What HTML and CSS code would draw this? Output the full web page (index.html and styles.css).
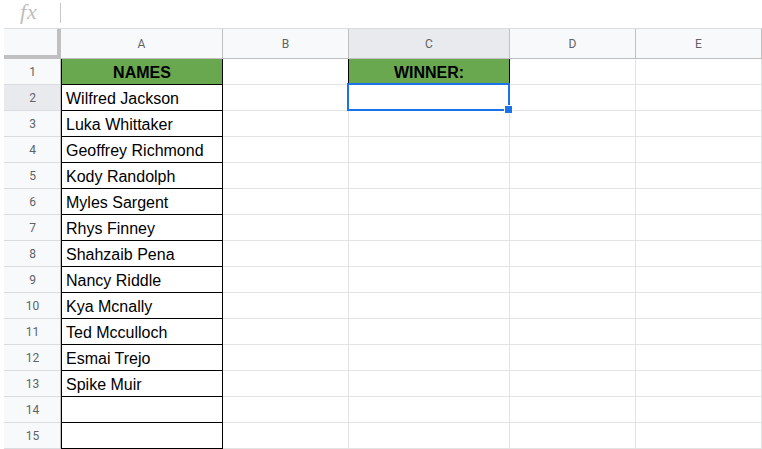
FILE: index.html
```html
<!DOCTYPE html>
<html>
<head>
<meta charset="utf-8">
<link rel="stylesheet" href="styles.css">
</head>
<body>
<div class="app">
  <div class="fbar">
    <span class="fx">fx</span>
    <span class="fdiv"></span>
  </div>
  <div class="sheet">
    <div class="corner"></div>
    <div class="ch">A</div>
    <div class="ch">B</div>
    <div class="ch ch-sel">C</div>
    <div class="ch">D</div>
    <div class="ch">E</div>

    <div class="rh">1</div>
    <div class="c a green bold">NAMES</div>
    <div class="c bk-r"></div>
    <div class="c green bold bk-r bk-b">WINNER:</div>
    <div class="c"></div>
    <div class="c"></div>

    <div class="rh rh-sel">2</div>
    <div class="c a">Wilfred Jackson</div>
    <div class="c"></div>
    <div class="c cur"><div class="sel"><span class="handle"></span></div></div>
    <div class="c"></div>
    <div class="c"></div>

    <div class="rh">3</div>
    <div class="c a">Luka Whittaker</div>
    <div class="c"></div><div class="c"></div><div class="c"></div><div class="c"></div>

    <div class="rh">4</div>
    <div class="c a">Geoffrey Richmond</div>
    <div class="c"></div><div class="c"></div><div class="c"></div><div class="c"></div>

    <div class="rh">5</div>
    <div class="c a">Kody Randolph</div>
    <div class="c"></div><div class="c"></div><div class="c"></div><div class="c"></div>

    <div class="rh">6</div>
    <div class="c a">Myles Sargent</div>
    <div class="c"></div><div class="c"></div><div class="c"></div><div class="c"></div>

    <div class="rh">7</div>
    <div class="c a">Rhys Finney</div>
    <div class="c"></div><div class="c"></div><div class="c"></div><div class="c"></div>

    <div class="rh">8</div>
    <div class="c a">Shahzaib Pena</div>
    <div class="c"></div><div class="c"></div><div class="c"></div><div class="c"></div>

    <div class="rh">9</div>
    <div class="c a">Nancy Riddle</div>
    <div class="c"></div><div class="c"></div><div class="c"></div><div class="c"></div>

    <div class="rh">10</div>
    <div class="c a">Kya Mcnally</div>
    <div class="c"></div><div class="c"></div><div class="c"></div><div class="c"></div>

    <div class="rh">11</div>
    <div class="c a">Ted Mcculloch</div>
    <div class="c"></div><div class="c"></div><div class="c"></div><div class="c"></div>

    <div class="rh">12</div>
    <div class="c a">Esmai Trejo</div>
    <div class="c"></div><div class="c"></div><div class="c"></div><div class="c"></div>

    <div class="rh">13</div>
    <div class="c a">Spike Muir</div>
    <div class="c"></div><div class="c"></div><div class="c"></div><div class="c"></div>

    <div class="rh">14</div>
    <div class="c a"></div>
    <div class="c"></div><div class="c"></div><div class="c"></div><div class="c"></div>

    <div class="rh">15</div>
    <div class="c a"></div>
    <div class="c"></div><div class="c"></div><div class="c"></div><div class="c"></div>
  </div>
</div>
</body>
</html>
```
FILE: styles.css
```css
* { box-sizing: border-box; }
html, body { margin: 0; padding: 0; background: #fff; overflow: hidden; }
body { font-family: "Liberation Sans", Arial, sans-serif; }

.app { margin-left: 4px; width: 758px; }

.fbar {
  height: 29px;
  border-bottom: 1px solid #dadce0;
  display: flex;
  align-items: flex-start;
}
.fx {
  font-family: "Liberation Serif", "DejaVu Serif", serif;
  font-style: italic;
  font-size: 22px;
  line-height: 24px;
  letter-spacing: 1px;
  color: #bdbdbd;
  margin-left: 16px;
  margin-top: 0;
  width: 40px;
}
.fdiv {
  width: 1px;
  height: 20px;
  margin-top: 3px;
  background: #c7c7c7;
}

.sheet {
  display: grid;
  grid-template-columns: 57px 162px 126px 161px 126px 126px;
  grid-template-rows: 30px repeat(15, 26px);
}

.corner {
  background: #f8f9fa;
  border-right: 4px solid #c0c0c0;
  border-bottom: 4px solid #c0c0c0;
}
.ch {
  background: #f8f9fa;
  border-right: 1px solid #c0c0c0;
  border-bottom: 1px solid #c0c0c0;
  display: flex;
  align-items: center;
  justify-content: center;
  font-family: Roboto, "Liberation Sans", sans-serif;
  font-size: 12px;
  color: #5f6368;
  padding-top: 1px;
}
.ch-sel { background: #e8eaed; }

.rh {
  background: #f8f9fa;
  border-right: 1px solid #c0c0c0;
  border-bottom: 1px solid #dadce0;
  display: flex;
  align-items: center;
  justify-content: center;
  font-family: Roboto, "Liberation Sans", sans-serif;
  font-size: 12px;
  color: #5f6368;
  padding-left: 1px;
}
.rh-sel { background: #e8eaed; }

.c {
  border-right: 1px solid #e2e3e3;
  border-bottom: 1px solid #e2e3e3;
  font-size: 16px;
  line-height: 22px;
  padding: 3px 0 0 4px;
  color: #000;
  white-space: nowrap;
  overflow: visible;
}
.a {
  border-left: 1px solid #000;
  border-right: 1px solid #000;
  border-bottom: 1px solid #000;
}
.bk-r { border-right: 1px solid #000; }
.bk-b { border-bottom: 1px solid #000; }
.green { background: #6aa84f; }
.bold { font-weight: bold; text-align: center; padding-left: 0; }

.cur { position: relative; z-index: 1; }
.sel {
  position: absolute;
  left: -2px;
  top: -2px;
  width: 163px;
  height: 28px;
  border: 2px solid #1a73e8;
}
.handle {
  position: absolute;
  right: -5px;
  bottom: -5px;
  width: 9px;
  height: 9px;
  background: #1a73e8;
  border: 1px solid #fff;
}
```
